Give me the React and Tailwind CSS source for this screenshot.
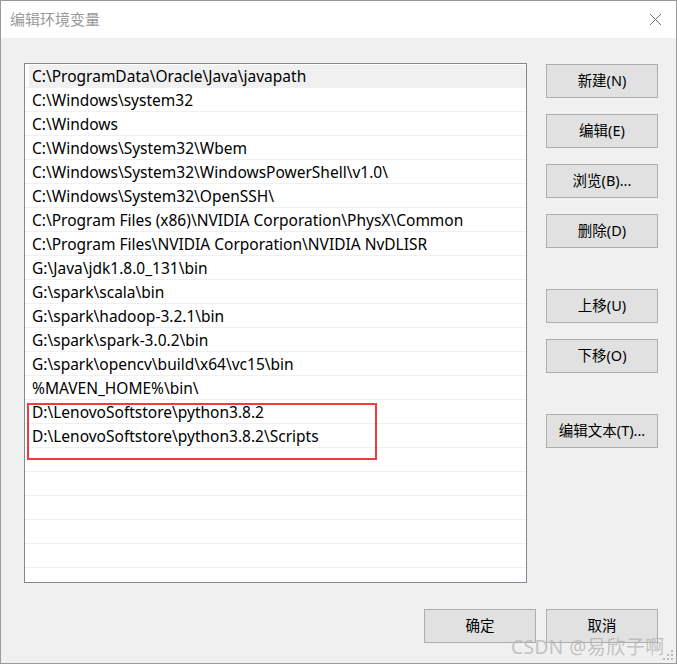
import React from "react";

const paths = [
  "C:\\ProgramData\\Oracle\\Java\\javapath",
  "C:\\Windows\\system32",
  "C:\\Windows",
  "C:\\Windows\\System32\\Wbem",
  "C:\\Windows\\System32\\WindowsPowerShell\\v1.0\\",
  "C:\\Windows\\System32\\OpenSSH\\",
  "C:\\Program Files (x86)\\NVIDIA Corporation\\PhysX\\Common",
  "C:\\Program Files\\NVIDIA Corporation\\NVIDIA NvDLISR",
  "G:\\Java\\jdk1.8.0_131\\bin",
  "G:\\spark\\scala\\bin",
  "G:\\spark\\hadoop-3.2.1\\bin",
  "G:\\spark\\spark-3.0.2\\bin",
  "G:\\spark\\opencv\\build\\x64\\vc15\\bin",
  "%MAVEN_HOME%\\bin\\",
  "D:\\LenovoSoftstore\\python3.8.2",
  "D:\\LenovoSoftstore\\python3.8.2\\Scripts",
  "",
  "",
  "",
  "",
  "",
  "",
];

function Btn({ children, className = "" }) {
  return (
    <div
      className={
        "w-[112px] h-[34px] flex items-center justify-center border border-[#adadad] bg-[#e1e1e1] text-[14.5px] leading-[18px] pb-[2px] text-black " +
        className
      }
    >
      {children}
    </div>
  );
}

export default function App() {
  return (
    <div className="relative w-[677px] h-[664px] border border-[#9a9a9a] bg-[#f0f0f0] flex flex-col overflow-hidden font-['Noto_Sans','Noto_Sans_CJK_SC',sans-serif]">
      {/* title bar */}
      <div className="h-[37px] bg-white flex items-center justify-between pl-[9px] pr-[14px] shrink-0">
        <span className="text-[15px] text-[#999999] font-['Noto_Sans_CJK_SC',sans-serif]">编辑环境变量</span>
        <svg width="13" height="13" viewBox="0 0 13 13">
          <path d="M1 1L12 12M12 1L1 12" stroke="#707070" strokeWidth="1" fill="none" />
        </svg>
      </div>

      <div className="flex flex-col pl-[23px] pr-[18px]">
        <div className="flex mt-[25px] gap-[19px]">
          {/* list box */}
          <div className="relative w-[504px] h-[520px] border border-[#828790] bg-white overflow-hidden">
            {paths.map((p, i) => (
              <div
                key={i}
                className={
                  "h-[24px] flex items-center border-b border-[#f0f0f0] text-[15.5px] leading-[20px] text-black whitespace-nowrap " +
                  (i === 0 ? "pl-[4px] pt-[1px]" : "pl-[7px]")
                }
              >
                {i === 0 ? (
                  <div className="h-[23px] w-full bg-[#f0f0f0] flex items-center pl-[3px]">{p}</div>
                ) : (
                  p
                )}
              </div>
            ))}
            {/* red highlight box */}
            <div className="absolute left-[2px] top-[339px] w-[350px] h-[57px] border-2 border-[#ee3b3b]" />
          </div>

          {/* right buttons */}
          <div className="flex flex-col mt-[1px]">
            <Btn>新建(N)</Btn>
            <Btn className="mt-[16px]">编辑(E)</Btn>
            <Btn className="mt-[16px]">浏览(B)...</Btn>
            <Btn className="mt-[16px]">删除(D)</Btn>
            <Btn className="mt-[41px]">上移(U)</Btn>
            <Btn className="mt-[16px]">下移(O)</Btn>
            <Btn className="mt-[41px]">编辑文本(T)...</Btn>
          </div>
        </div>

        <div className="flex justify-end gap-[10px] mt-[26px]">
          <Btn>确定</Btn>
          <Btn>取消</Btn>
        </div>
      </div>

      {/* watermark */}
      <div className="absolute left-[510px] top-[636px] text-[19px] leading-[20px] text-[#b4b4b4]/80 font-['Noto_Sans','Noto_Sans_CJK_SC',sans-serif] tracking-[0.5px]">
        CSDN @易欣子啊
      </div>

      {/* resize grip */}
      <svg className="absolute right-[2px] bottom-[2px]" width="11" height="11" viewBox="0 0 11 11">
        <rect x="8" y="0" width="2" height="2" fill="#bcbcbc" />
        <rect x="4" y="4" width="2" height="2" fill="#bcbcbc" />
        <rect x="8" y="4" width="2" height="2" fill="#bcbcbc" />
        <rect x="0" y="8" width="2" height="2" fill="#bcbcbc" />
        <rect x="4" y="8" width="2" height="2" fill="#bcbcbc" />
        <rect x="8" y="8" width="2" height="2" fill="#bcbcbc" />
      </svg>
    </div>
  );
}
